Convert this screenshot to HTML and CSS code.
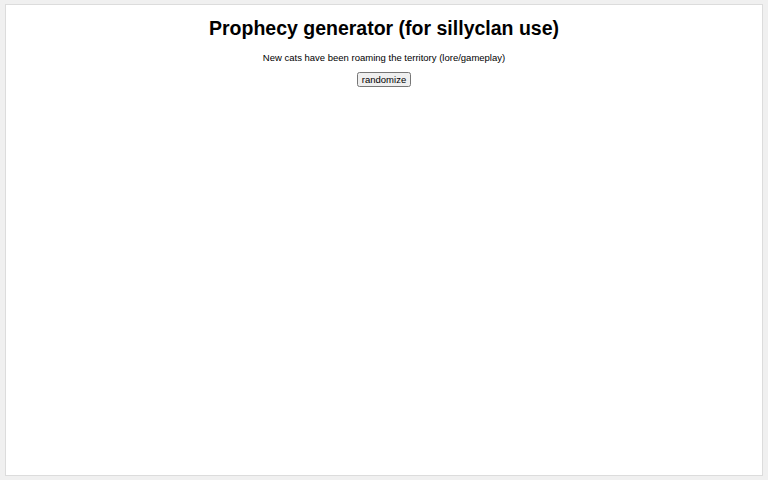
FILE: index.html
```html
<!DOCTYPE html>
<html lang="en">

<head>
    <meta charset="UTF-8">
    <meta name="viewport" content="width=device-width, initial-scale=1.0">
    <title>Prophecy generator</title>
    <link rel="stylesheet" href="styles.css">
</head>

<body>
    <div class="page">
        <h1>Prophecy generator (for sillyclan use)</h1>
        <p id="prophecy">New cats have been roaming the territory (lore/gameplay)</p>
        <button onclick="randomize()">randomize</button>
    </div>

    <script>
        const prophecies = [
            "New cats have been roaming the territory (lore/gameplay)",
            "A dark shadow will fall over the camp",
            "The stars will guide a lost kit home",
            "Fire will clear the path for the clan"
        ];

        function randomize() {
            const i = Math.floor(Math.random() * prophecies.length);
            document.getElementById("prophecy").textContent = prophecies[i];
        }
    </script>
</body>

</html>
```

FILE: styles.css
```css
body {
    margin: 0;
    padding: 4px 5px;
    background-color: #f0f0f0;
    font-family: "Liberation Sans", Arial, sans-serif;
}

.page {
    height: 469px;
    background-color: white;
    border: 1px solid #dcdcdc;
    text-align: center;
    padding-top: 1px;
}

h1 {
    font-size: 19.5px;
    margin: 11px 0 0;
}

p {
    font-size: 9.5px;
    margin: 12px 0 0;
}

button {
    font-family: "Liberation Sans", Arial, sans-serif;
    font-size: 9.5px;
    margin-top: 9px;
    padding: 0 3px;
}
```
